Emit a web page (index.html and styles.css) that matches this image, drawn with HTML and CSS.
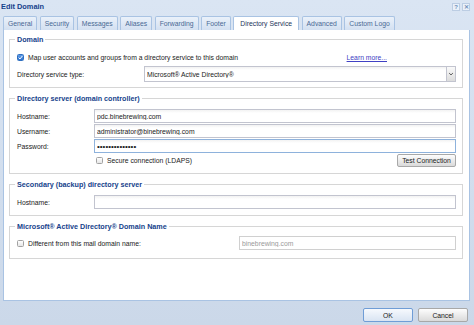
FILE: index.html
```html
<!DOCTYPE html>
<html lang="en">
<head>
  <meta charset="UTF-8" />
  <title>Edit Domain</title>
  <link rel="stylesheet" href="styles.css">
</head>
<body>

  <div class="window">
    <div class="window-header">
      <span class="window-title">Edit Domain</span>
      <div class="window-tools">
        <span class="tool">?</span>
        <span class="tool">&#x2715;</span>
      </div>
    </div>

    <ul class="tabs">
      <li>General</li>
      <li>Security</li>
      <li>Messages</li>
      <li>Aliases</li>
      <li>Forwarding</li>
      <li>Footer</li>
      <li class="active">Directory Service</li>
      <li>Advanced</li>
      <li>Custom Logo</li>
    </ul>

    <div class="panel-body">
      <fieldset class="group first">
        <legend>Domain</legend>
        <div class="field">
          <span class="check checked">
            <svg viewBox="0 0 8 8" width="5" height="5"><path d="M1 4.2 L3.2 6.3 L7 1.6" fill="none" stroke="#fff" stroke-width="1.6"/></svg>
          </span>
          <span>Map user accounts and groups from a directory service to this domain</span>
          <a class="learn-more" href="#">Learn more...</a>
        </div>
        <div class="field tall">
          <span class="field-label wide">Directory service type:</span>
          <div class="combo">
            <input class="text" type="text" value="Microsoft® Active Directory®" readonly>
            <span class="trigger">
              <svg viewBox="0 0 8 8" width="6" height="6"><path d="M1.5 2.8 L4 5.2 L6.5 2.8" fill="none" stroke="#555" stroke-width="1.3"/></svg>
            </span>
          </div>
        </div>
      </fieldset>

      <fieldset class="group">
        <legend>Directory server (domain controller)</legend>
        <div class="field">
          <span class="field-label">Hostname:</span>
          <input class="text" type="text" value="pdc.binebrewing.com">
        </div>
        <div class="field">
          <span class="field-label">Username:</span>
          <input class="text" type="text" value="administrator@binebrewing.com">
        </div>
        <div class="field">
          <span class="field-label">Password:</span>
          <input class="text focus dots" type="text" value="••••••••••••••">
        </div>
        <div class="field indent">
          <span class="check"></span>
          <span>Secure connection (LDAPS)</span>
          <button class="btn test">Test Connection</button>
        </div>
      </fieldset>

      <fieldset class="group">
        <legend>Secondary (backup) directory server</legend>
        <div class="field">
          <span class="field-label">Hostname:</span>
          <input class="text" type="text" value="">
        </div>
      </fieldset>

      <fieldset class="group last">
        <legend>Microsoft® Active Directory® Domain Name</legend>
        <div class="field">
          <span class="check-label">
            <span class="check"></span>
            <span>Different from this mail domain name:</span>
          </span>
          <input class="text" type="text" value="binebrewing.com" disabled>
        </div>
      </fieldset>
    </div>

    <div class="footer">
      <button class="btn default">OK</button>
      <button class="btn">Cancel</button>
    </div>
  </div>

</body>
</html>
```

FILE: styles.css
```css
* {
  box-sizing: border-box;
}

body {
  margin: 0;
  background: #cfdbeb;
  font-family: 'Liberation Sans', Arial, sans-serif;
  font-size: 6.8px;
  color: #1a1a1a;
}

.window {
  width: 474px;
  height: 325px;
  display: flex;
  flex-direction: column;
  background: linear-gradient(#dae5f3, #cbd8e9);
}

.window-header {
  height: 15px;
  display: flex;
  align-items: center;
  justify-content: space-between;
  padding: 0 4px 2px 1px;
}

.window-title {
  font-weight: bold;
  font-size: 7.4px;
  color: #15428b;
}

.window-tools {
  display: flex;
  gap: 2px;
}

.tool {
  width: 8px;
  height: 8px;
  border: 1px solid #bccde3;
  background: #e9f0f9;
  color: #6f8fb8;
  font-size: 6px;
  font-weight: bold;
  line-height: 1;
  display: flex;
  align-items: center;
  justify-content: center;
}

.tabs {
  list-style: none;
  margin: 0;
  padding: 0 0 0 3px;
  height: 15px;
  display: flex;
  align-items: flex-end;
  gap: 2.5px;
}

.tabs li {
  height: 14px;
  padding: 0 4px;
  display: flex;
  align-items: center;
  border: 1px solid #a9c3e3;
  border-bottom: none;
  border-radius: 2px 2px 0 0;
  background: linear-gradient(#eaf1fa, #d3e0f1);
  color: #4a6994;
  white-space: nowrap;
}

.tabs li.active {
  background: #fff;
  color: #1c3559;
  padding: 0 6px;
}

.panel-body {
  flex: 1;
  margin: 0 4px 0 3px;
  padding: 5px 6px 0 5px;
  background: #fff;
  border: 1px solid #a9c3e3;
  border-top: none;
}

.group {
  margin: 0 0 6px;
  padding: 6px 6px 6px 7px;
  border: 1px solid #d6d6d6;
  min-width: 0;
}

.group.first {
  padding-bottom: 5px;
}

.group.last {
  padding-top: 5px;
  padding-bottom: 8px;
}

.group legend {
  margin-left: -2px;
  padding: 0 2px;
  font-size: 7.2px;
  font-weight: bold;
  line-height: 9px;
  color: #15428b;
}

.field {
  height: 14px;
  display: flex;
  align-items: center;
}

.field + .field {
  margin-top: 1px;
}

.field.tall {
  height: 16px;
  margin-top: 2px;
}

.field.indent {
  height: 13px;
  padding-left: 79px;
}

.field-label {
  width: 77px;
  flex: none;
}

.field-label.wide {
  width: 127px;
}

.check-label {
  width: 222px;
  flex: none;
  display: flex;
  align-items: center;
}

.check {
  width: 7px;
  height: 7px;
  margin-right: 4px;
  flex: none;
  display: flex;
  align-items: center;
  justify-content: center;
  border: 1px solid #a2a2a2;
  border-radius: 1.5px;
  background: linear-gradient(#fff, #e6e6e6);
}

.check.checked {
  border-color: #2f6fc0;
  background: linear-gradient(#5c9ae6, #2f74cf);
}

.learn-more {
  margin-left: auto;
  margin-right: 69px;
  color: #4040c4;
}

.text {
  flex: 1;
  min-width: 0;
  height: 14px;
  margin: 0;
  padding: 0 2px;
  border: 1px solid #c2c4cf;
  background: linear-gradient(#f2f2f2, #fff 3px);
  font: inherit;
  color: #1a1a1a;
  outline: none;
}

.text.focus {
  border-color: #8eb2dc;
}

.text.dots {
  font-size: 8px;
  letter-spacing: 0;
}

.text:disabled {
  color: #9a9a9a;
  border-color: #d0d0d0;
  background: #fff;
}

.combo {
  flex: 1;
  height: 16px;
  display: flex;
}

.combo .text {
  height: 16px;
  border-right: none;
}

.trigger {
  width: 10px;
  height: 16px;
  display: flex;
  align-items: center;
  justify-content: center;
  border: 1px solid #c2c4cf;
  background: linear-gradient(#fafafa, #dcdcdc);
}

.btn {
  width: 50px;
  height: 14px;
  padding: 0;
  border: 1px solid #a8a8a8;
  border-radius: 2px;
  background: linear-gradient(#fdfdfd, #dadada);
  font: inherit;
  color: #1a1a1a;
}

.btn.default {
  border-color: #6f9dd6;
  background: linear-gradient(#f6f9fd, #d9e4f2);
}

.btn.test {
  width: 59px;
  height: 13px;
  margin-left: auto;
}

.footer {
  height: 24px;
  display: flex;
  justify-content: flex-end;
  gap: 5px;
  padding: 7px 6px 0 0;
}
```
